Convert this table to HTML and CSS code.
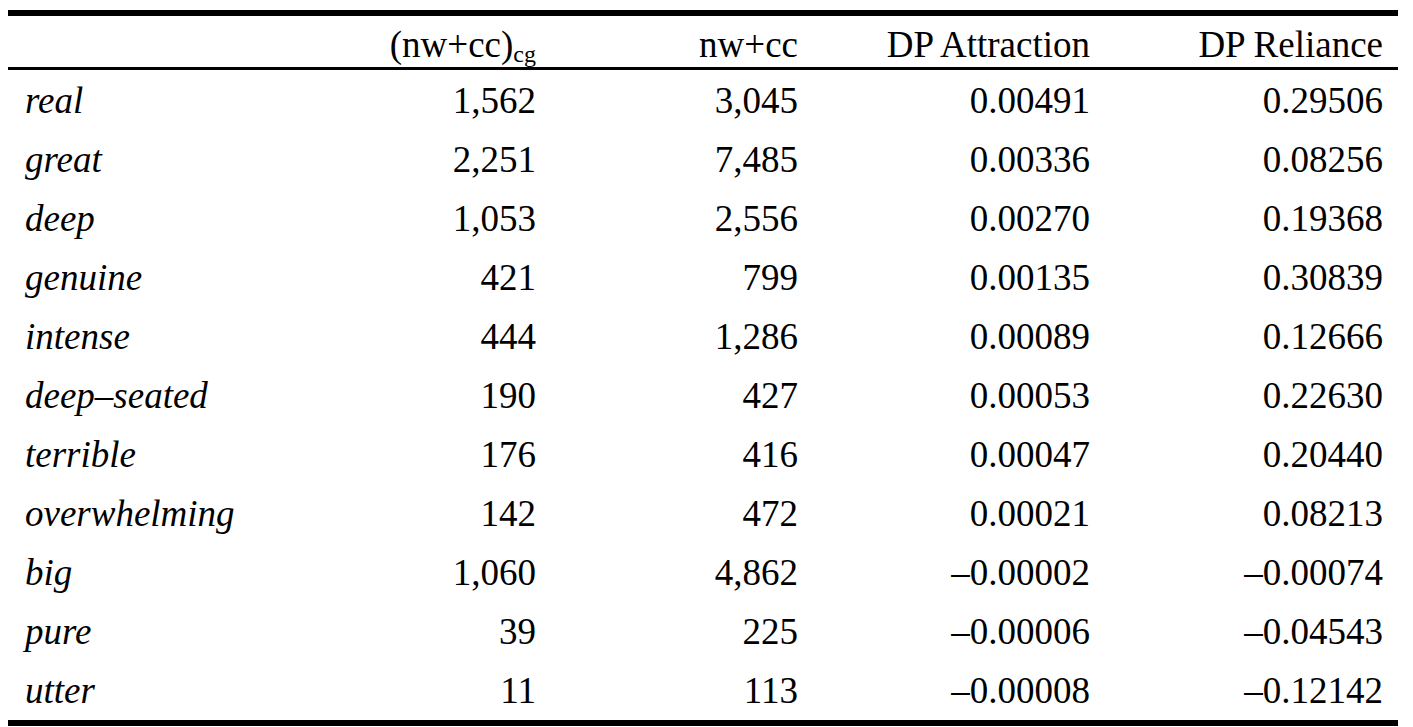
FILE: index.html
```html
<!DOCTYPE html>
<html>
<head>
<meta charset="utf-8">
<link rel="stylesheet" href="styles.css">
</head>
<body>
<div class="page">
<table class="data">
  <colgroup>
    <col class="c0"><col class="c1"><col class="c2"><col class="c3"><col class="c4">
  </colgroup>
  <thead>
    <tr>
      <th class="lbl"></th>
      <th>(nw+cc)<sub class="sub">cg</sub></th>
      <th>nw+cc</th>
      <th>DP Attraction</th>
      <th class="last">DP Reliance</th>
    </tr>
  </thead>
  <tbody>
    <tr><td class="lbl">real</td><td>1,562</td><td>3,045</td><td>0.00491</td><td class="last">0.29506</td></tr>
    <tr><td class="lbl">great</td><td>2,251</td><td>7,485</td><td>0.00336</td><td class="last">0.08256</td></tr>
    <tr><td class="lbl">deep</td><td>1,053</td><td>2,556</td><td>0.00270</td><td class="last">0.19368</td></tr>
    <tr><td class="lbl">genuine</td><td>421</td><td>799</td><td>0.00135</td><td class="last">0.30839</td></tr>
    <tr><td class="lbl">intense</td><td>444</td><td>1,286</td><td>0.00089</td><td class="last">0.12666</td></tr>
    <tr><td class="lbl">deep–seated</td><td>190</td><td>427</td><td>0.00053</td><td class="last">0.22630</td></tr>
    <tr><td class="lbl">terrible</td><td>176</td><td>416</td><td>0.00047</td><td class="last">0.20440</td></tr>
    <tr><td class="lbl">overwhelming</td><td>142</td><td>472</td><td>0.00021</td><td class="last">0.08213</td></tr>
    <tr><td class="lbl">big</td><td>1,060</td><td>4,862</td><td>–0.00002</td><td class="last">–0.00074</td></tr>
    <tr><td class="lbl">pure</td><td>39</td><td>225</td><td>–0.00006</td><td class="last">–0.04543</td></tr>
    <tr class="end"><td class="lbl">utter</td><td>11</td><td>113</td><td>–0.00008</td><td class="last">–0.12142</td></tr>
  </tbody>
</table>
</div>
</body>
</html>
```
FILE: styles.css
```css
html, body {
  margin: 0;
  padding: 0;
  background: #fff;
}
.page {
  padding: 10px 0 0 8px;
}
.data {
  width: 1390px;
  table-layout: fixed;
  border-collapse: separate;
  border-spacing: 0;
  border-top: 6px solid #000;
  border-bottom: 6px solid #000;
  font-family: "Liberation Serif", "Times New Roman", serif;
  font-size: 37px;
  color: #000;
}
.c0 { width: 292px; }
.c1 { width: 236px; }
.c2 { width: 262px; }
.c3 { width: 292px; }
.c4 { width: 308px; }
.data th {
  font-weight: normal;
  text-align: right;
  padding: 6px 0 0 0;
  line-height: 45px;
  border-bottom: 3px solid #000;
  white-space: nowrap;
}
.data td {
  text-align: right;
  padding: 2px 0 0 0;
  line-height: 57px;
  white-space: nowrap;
}
.data .end td {
  padding-bottom: 1px;
}
.data .lbl {
  text-align: left;
  padding-left: 17px;
  font-style: italic;
}
.data .last {
  padding-right: 15px;
}
.sub {
  font-size: 24px;
  line-height: 0;
  vertical-align: -5px;
}
```
